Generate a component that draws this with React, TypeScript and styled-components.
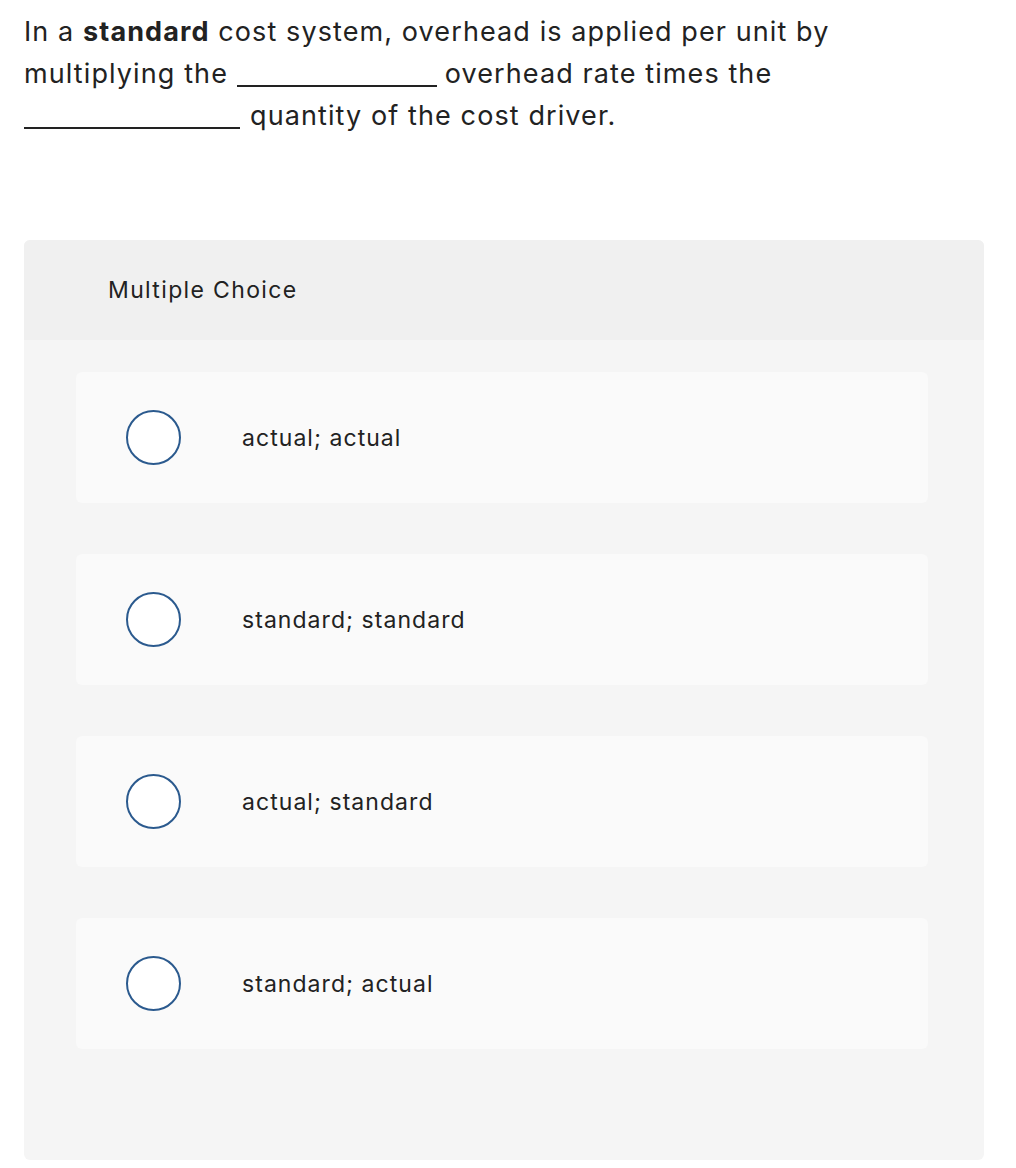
import React from "react";
import styled, { createGlobalStyle } from "styled-components";

const GlobalStyle = createGlobalStyle`
  html, body {
    margin: 0;
    padding: 0;
    background: #ffffff;
  }
  body {
    font-family: Inter, "Open Sans", "Liberation Sans", sans-serif;
    color: #222222;
  }
`;

const Page = styled.div`
  width: 1016px;
  padding: 11px 32px 8px 24px;
  box-sizing: border-box;
`;

const Question = styled.p`
  margin: 0;
  font-size: 27px;
  line-height: 42px;
  letter-spacing: 1.1px;
  color: #222222;

  strong {
    font-weight: 700;
  }
`;

const Blank = styled.span<{ $width: number; $gap: number }>`
  display: inline-block;
  width: ${(p) => p.$width}px;
  margin-right: ${(p) => p.$gap}px;
  border-bottom: 2px solid #222222;
  height: 30px;
  vertical-align: -4px;
`;

const Panel = styled.section`
  margin-top: 103px;
  width: 960px;
  border-radius: 6px;
  overflow: hidden;
  background: #f5f5f5;
`;

const PanelHeader = styled.div`
  height: 100px;
  background: #f0f0f0;
  display: flex;
  align-items: center;
  padding-left: 84px;
  font-size: 23px;
  letter-spacing: 1.35px;
  color: #222222;
`;

const OptionList = styled.div`
  display: flex;
  flex-direction: column;
  gap: 51px;
  padding: 32px 56px 111px 52px;
`;

const Option = styled.label`
  height: 131px;
  background: #fafafa;
  border-radius: 6px;
  display: flex;
  align-items: center;
  padding-left: 50px;
  cursor: pointer;
`;

const Radio = styled.span`
  width: 55px;
  height: 55px;
  box-sizing: border-box;
  border-radius: 50%;
  border: 2px solid #2b5a8e;
  background: #ffffff;
  flex-shrink: 0;
`;

const OptionText = styled.span`
  margin-left: 61px;
  font-size: 23px;
  letter-spacing: 1.05px;
  color: #222222;
`;

const options = [
  "actual; actual",
  "standard; standard",
  "actual; standard",
  "standard; actual",
];

export default function App() {
  return (
    <>
      <GlobalStyle />
      <Page>
        <Question>
          In a <strong>standard</strong> cost system, overhead is applied per
          unit by
          <br />
          multiplying the <Blank $width={200} $gap={8} />
          overhead rate times the
          <br />
          <Blank $width={216} $gap={10} />
          quantity of the cost driver.
        </Question>
        <Panel>
          <PanelHeader>Multiple Choice</PanelHeader>
          <OptionList>
            {options.map((opt) => (
              <Option key={opt}>
                <Radio />
                <OptionText>{opt}</OptionText>
              </Option>
            ))}
          </OptionList>
        </Panel>
      </Page>
    </>
  );
}
